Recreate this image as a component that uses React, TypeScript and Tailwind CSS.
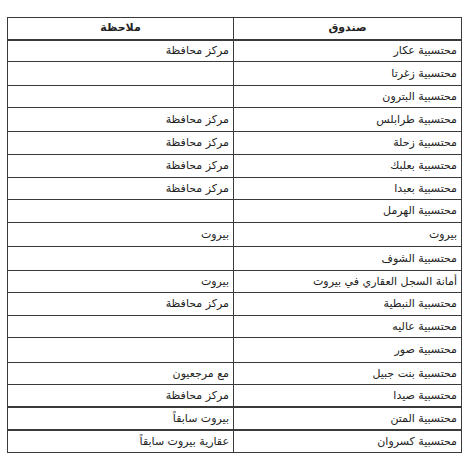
const rows: [string, string, string][] = [
  ["محتسبية عكار", "مركز محافظة", "h-[21px] border-b"],
  ["محتسبية زغرتا", "", "h-[24px] border-b"],
  ["محتسبية البترون", "", "h-[22px] border-b"],
  ["محتسبية طرابلس", "مركز محافظة", "h-[24px] border-b"],
  ["محتسبية زحلة", "مركز محافظة", "h-[23px] border-b"],
  ["محتسبية بعلبك", "مركز محافظة", "h-[23px] border-b"],
  ["محتسبية بعبدا", "مركز محافظة", "h-[22px] border-b"],
  ["محتسبية الهرمل", "", "h-[23px] border-b"],
  ["بيروت", "بيروت", "h-[24px] border-b"],
  ["محتسبية الشوف", "", "h-[24px] border-b"],
  ["أمانة السجل العقاري في بيروت", "بيروت", "h-[22px] border-b"],
  ["محتسبية النبطية", "مركز محافظة", "h-[23px] border-b"],
  ["محتسبية عاليه", "", "h-[22px] border-b"],
  ["محتسبية صور", "", "h-[25px] border-b"],
  ["محتسبية بنت جبيل", "مع مرجعيون", "h-[22px] border-b"],
  ["محتسبية صيدا", "مركز محافظة", "h-[23px] border-b-2"],
  ["محتسبية المتن", "بيروت سابقاً", "h-[23px] border-b-2"],
  ["محتسبية كسروان", "عقارية بيروت سابقاً", "h-[21px]"],
];

export default function App() {
  return (
    <div className="w-[474px] h-[474px] bg-white pt-[17px] pl-[7px]" style={{ fontFamily: '"DejaVu Sans", sans-serif' }}>
      <div dir="rtl" className="w-[455px] border border-[#3a3a3a] text-[11px] text-[#222]">
        <div className="grid grid-cols-[228px_1fr] h-[23px] border-b-2 border-[#3a3a3a] font-bold">
          <div className="flex items-center justify-center border-l border-[#3a3a3a]">صندوق</div>
          <div className="flex items-center justify-center">ملاحظة</div>
        </div>
        {rows.map(([box, note, cls], i) => (
          <div key={i} className={"grid grid-cols-[228px_1fr] border-[#3a3a3a] " + cls}>
            <div className="flex items-center pr-[4px] pt-[1px] border-l border-[#3a3a3a]">{box}</div>
            <div className="flex items-center pr-[4px] pt-[1px]">{note}</div>
          </div>
        ))}
      </div>
    </div>
  );
}
